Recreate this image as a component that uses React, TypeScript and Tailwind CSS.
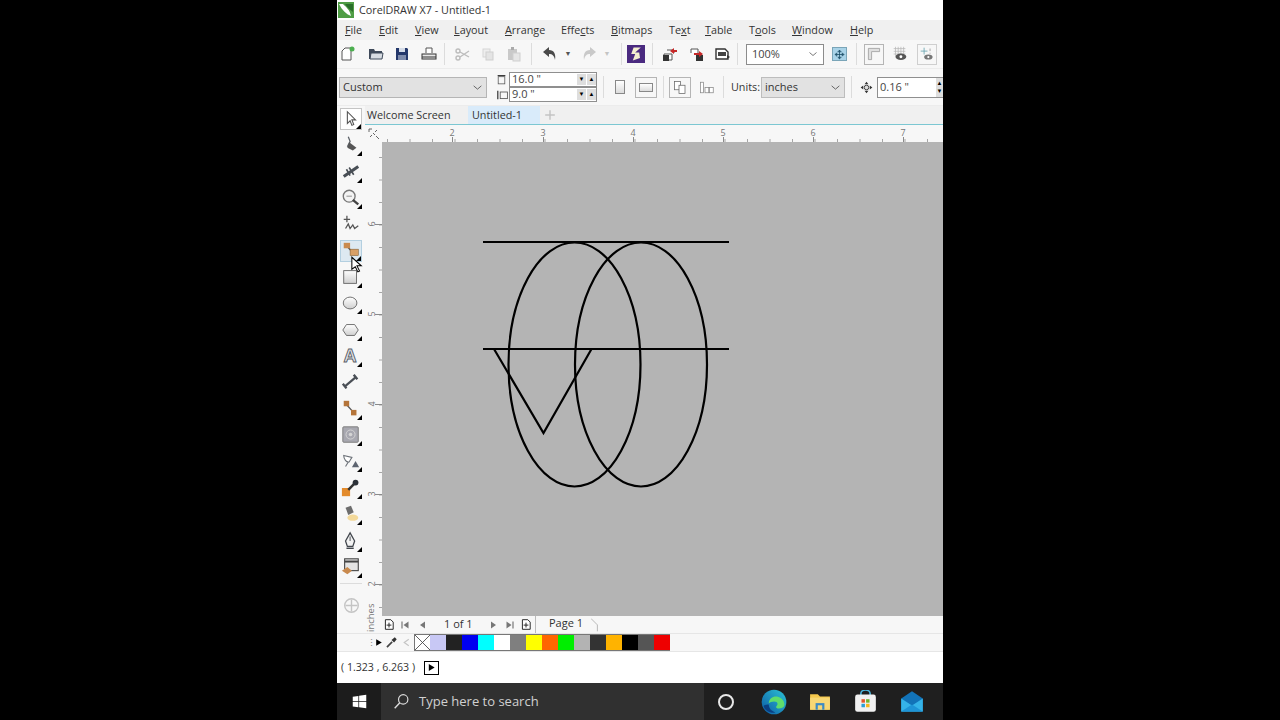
import type { ReactNode } from "react";

const menus = [
  { label: "File", u: 0, cls: "w-[34px]" },
  { label: "Edit", u: 0, cls: "w-[36px]" },
  { label: "View", u: 0, cls: "w-[39px]" },
  { label: "Layout", u: 0, cls: "w-[51px]" },
  { label: "Arrange", u: 0, cls: "w-[56px]" },
  { label: "Effects", u: 4, cls: "w-[50px]" },
  { label: "Bitmaps", u: 0, cls: "w-[58px]" },
  { label: "Text", u: 2, cls: "w-[36px]" },
  { label: "Table", u: 0, cls: "w-[44px]" },
  { label: "Tools", u: 1, cls: "w-[43px]" },
  { label: "Window", u: 0, cls: "w-[58px]" },
  { label: "Help", u: 0, cls: "w-[30px]" },
];

const swatches = ["#c8c8f5", "#222222", "#0000f0", "#00ffff", "#ffffff", "#7f7f7f", "#ffff00", "#ff6600", "#00ee00", "#b3b3b3", "#333333", "#ffb300", "#000000", "#555555", "#ee0000"];

function Ico({ children, className = "w-[20px] h-[20px]", vb = "0 0 20 20" }: { children: ReactNode; className?: string; vb?: string }) {
  return (
    <svg viewBox={vb} className={className} fill="none">
      {children}
    </svg>
  );
}

function Sep({ h = "h-[22px]" }: { h?: string }) {
  return <div className={`w-px bg-[#dcdcdc] ${h}`} />;
}

function TopToolbar() {
  return (
    <div className="h-[28px] flex items-center bg-[#f7f7f7]">
      <div className="w-[20px] flex justify-center">
        <Ico>
          <path d="M5 16V7l3-3h6v12z" fill="#fff" stroke="#555" strokeWidth="1" />
          <circle cx="15" cy="5" r="2.5" fill="#4caf50" />
        </Ico>
      </div>
      <div className="w-[27px] ml-[5px] flex justify-center">
        <Ico>
          <path d="M3 15V5h5l1 2h7v8z" fill="#3f4a5a" />
          <path d="M5 9h12l-1 6H4z" fill="#d8dde3" stroke="#3f4a5a" />
        </Ico>
      </div>
      <div className="w-[26px] flex justify-center">
        <Ico>
          <path d="M4 4h11l1 1v11H4z" fill="#24386b" />
          <rect x="7" y="4" width="6" height="4" fill="#d5dce8" />
          <rect x="6" y="11" width="8" height="5" fill="#7d8bab" />
        </Ico>
      </div>
      <div className="w-[27px] flex justify-center">
        <Ico>
          <path d="M7 9V4h6v5" fill="#fff" stroke="#555" />
          <rect x="3" y="10" width="14" height="5" fill="#e8e8e8" stroke="#333" />
          <path d="M3 13h14" stroke="#333" />
        </Ico>
      </div>
      <div className="ml-[2px] mr-[3px]">
        <Sep />
      </div>
      <div className="w-[27px] flex justify-center">
        <Ico>
          <circle cx="6" cy="7" r="2" stroke="#bdbdbd" strokeWidth="1.4" />
          <circle cx="6" cy="14" r="2" stroke="#bdbdbd" strokeWidth="1.4" />
          <path d="M8 8l9 5M8 13l9-6" stroke="#bdbdbd" strokeWidth="1.4" />
        </Ico>
      </div>
      <div className="w-[26px] flex justify-center">
        <Ico>
          <rect x="5" y="5" width="7" height="8" fill="#eee" stroke="#d5d5d5" />
          <rect x="8" y="8" width="7" height="8" fill="#e4e4e4" stroke="#cfcfcf" />
        </Ico>
      </div>
      <div className="w-[26px] flex justify-center">
        <Ico>
          <rect x="4" y="5" width="9" height="11" fill="#c9c9c9" />
          <rect x="7" y="3" width="3" height="3" fill="#aaa" />
          <rect x="9" y="9" width="7" height="8" fill="#e6e6e6" stroke="#cfcfcf" />
        </Ico>
      </div>
      <div className="ml-[4px] mr-[8px]">
        <Sep />
      </div>
      <div className="w-[20px] flex justify-center">
        <Ico>
          <path d="M9 3L3 8l6 5v-3c3 0 5 1 6 6 1-6-1-10-6-10z" fill="#4a4a4a" />
        </Ico>
      </div>
      <div className="w-[16px] text-[#555] text-[7px] text-center">▼</div>
      <div className="w-[20px] ml-[3px] flex justify-center">
        <Ico>
          <path d="M11 3l6 5-6 5v-3c-3 0-5 1-6 6-1-6 1-10 6-10z" fill="#c9c9c9" />
        </Ico>
      </div>
      <div className="w-[16px] text-[#c4c4c4] text-[7px] text-center">▼</div>
      <div className="ml-[6px] mr-[5px]">
        <Sep />
      </div>
      <div className="w-[18px] h-[18px] bg-[#4a2a80] flex items-center justify-center">
        <Ico className="w-[16px] h-[16px]">
          <path d="M16 2H7L4 10h5l-3 8 9-3-1-7H9z" fill="#f4efd0" />
        </Ico>
      </div>
      <div className="ml-[7px] mr-[4px]">
        <Sep />
      </div>
      <div className="w-[26px] flex justify-center">
        <Ico>
          <path d="M7 6h7v3M4 10h8v6H4z" stroke="#555" fill="#fff" />
          <rect x="3" y="11" width="6" height="6" fill="#333" />
          <path d="M10 7l4-3v2h3v2h-3v2z" fill="#c62828" />
        </Ico>
      </div>
      <div className="w-[26px] flex justify-center">
        <Ico>
          <path d="M5 9V5h7v4" stroke="#555" fill="#fff" />
          <rect x="10" y="11" width="7" height="6" fill="#333" />
          <path d="M8 9l5-0v-2l4 3-4 3v-2H8z" fill="#c62828" />
        </Ico>
      </div>
      <div className="w-[26px] flex justify-center">
        <Ico>
          <path d="M4 15V5h9l3 3v7z" fill="#fff" stroke="#333" strokeWidth="1.4" />
          <rect x="6" y="8" width="8" height="4" fill="#444" />
          <path d="M15 11l3 2-3 2z" fill="#333" />
        </Ico>
      </div>
      <div className="ml-[2px] mr-[8px]">
        <Sep />
      </div>
      <div className="w-[78px] h-[21px] border border-[#8c8c8c] bg-white flex items-center justify-between pl-[5px] pr-[5px]">
        <span className="text-[11px] text-[#444]">100%</span>
        <Ico className="w-[10px] h-[10px]">
          <path d="M3 7l7 6 7-6" stroke="#555" strokeWidth="1.6" />
        </Ico>
      </div>
      <div className="w-[30px] flex justify-center">
        <div className="w-[15px] h-[14px] bg-[#a9d3e8] border border-[#7aa5b8] flex items-center justify-center">
          <Ico className="w-[11px] h-[11px]">
            <path d="M10 2v16M2 10h16M10 2L7 5h6zM10 18l-3-3h6zM2 10l3-3v6zM18 10l-3-3v6z" stroke="#174a63" strokeWidth="1.4" />
          </Ico>
        </div>
      </div>
      <div className="ml-[2px] mr-[7px]">
        <Sep />
      </div>
      <div className="w-[20px] h-[21px] border border-[#b5b5b5] bg-[#f7f7f7] flex items-center justify-center">
        <Ico className="w-[16px] h-[16px]">
          <path d="M3 3h14v4H7v10H3z" fill="#dfdfdf" stroke="#9a9a9a" />
        </Ico>
      </div>
      <div className="w-[26px] ml-[3px] flex justify-center">
        <Ico className="w-[18px] h-[18px]">
          <path d="M3 4h13M3 7h13M3 10h13M5 2v10M8 2v10M11 2v10M14 2v10" stroke="#b5b5b5" strokeWidth=".8" />
          <ellipse cx="11" cy="13" rx="6" ry="3.6" fill="#555" />
          <circle cx="11" cy="13" r="1.6" fill="#fff" />
        </Ico>
      </div>
      <div className="w-[20px] h-[21px] ml-[4px] border border-[#cfcfcf] flex items-center justify-center">
        <Ico className="w-[17px] h-[17px]">
          <path d="M2 6h8M6 2v8" stroke="#6aa5b0" />
          <path d="M13 3v3M13 8v1" stroke="#999" />
          <ellipse cx="11" cy="13" rx="5" ry="3" fill="#777" />
          <circle cx="11" cy="13" r="1.3" fill="#fff" />
        </Ico>
      </div>
    </div>
  );
}

function Spin({ value, icon }: { value: string; icon: ReactNode }) {
  return (
    <div className="flex items-center h-[15px]">
      <div className="w-[15px] flex justify-center">{icon}</div>
      <div className="w-[88px] h-[15px] bg-white border border-[#8f8f8f] flex items-center pl-[2px] text-[11px] text-[#444]">
        <span className="flex-1">{value}</span>
        <span className="w-[9px] h-[11px] bg-[#dedede] flex items-center justify-center text-[6px] text-black">▼</span>
        <span className="w-[9px] h-[11px] ml-px bg-[#dedede] flex items-center justify-center text-[6px] text-black">▲</span>
      </div>
    </div>
  );
}

function PropertyBar() {
  return (
    <div className="h-[38px] flex items-center bg-[#f7f7f7] border-t border-[#ececec] border-b pl-[2px]">
      <div className="w-[148px] h-[21px] bg-[#e2e2e2] border border-[#b5b5b5] flex items-center justify-between px-[3px]">
        <span className="text-[11px] text-[#333]">Custom</span>
        <Ico className="w-[11px] h-[11px]">
          <path d="M3 7l7 6 7-6" stroke="#555" strokeWidth="1.6" />
        </Ico>
      </div>
      <div className="ml-[7px] flex flex-col">
        <Spin
          value='16.0 "'
          icon={
            <Ico className="w-[11px] h-[12px]">
              <rect x="4" y="4" width="12" height="13" stroke="#555" strokeWidth="1.4" />
              <path d="M3 2h14" stroke="#333" strokeWidth="2" />
            </Ico>
          }
        />
        <Spin
          value='9.0 "'
          icon={
            <Ico className="w-[12px] h-[12px]">
              <rect x="7" y="5" width="12" height="11" stroke="#555" strokeWidth="1.4" />
              <path d="M3 3v14" stroke="#333" strokeWidth="2" />
            </Ico>
          }
        />
      </div>
      <div className="ml-[6px] mr-[11px]">
        <Sep />
      </div>
      <div className="w-[10px] h-[14px] border border-[#888] bg-gradient-to-b from-white to-[#dcdcdc]" />
      <div className="ml-[10px] w-[22px] h-[21px] flex items-center justify-center border border-[#b5b5b5]">
        <div className="w-[14px] h-[9px] shrink-0 border border-[#888] bg-gradient-to-b from-white to-[#dcdcdc]" />
      </div>
      <div className="ml-[6px] mr-[5px]">
        <Sep />
      </div>
      <div className="w-[22px] h-[21px] border border-[#b5b5b5] flex items-center justify-center">
        <Ico className="w-[15px] h-[15px]">
          <rect x="2" y="2" width="8" height="11" fill="#fff" stroke="#666" />
          <rect x="8" y="7" width="8" height="11" fill="#fff" stroke="#666" />
        </Ico>
      </div>
      <div className="w-[26px] ml-[2px] flex justify-center">
        <Ico className="w-[15px] h-[15px]">
          <rect x="2" y="3" width="4" height="14" fill="#fff" stroke="#888" />
          <rect x="8" y="10" width="5" height="7" fill="#fff" stroke="#888" />
          <rect x="14" y="10" width="5" height="7" fill="#fff" stroke="#888" />
        </Ico>
      </div>
      <div className="ml-[4px] mr-[7px]">
        <Sep />
      </div>
      <span className="text-[10.8px] text-[#333] w-[30px]">Units:</span>
      <div className="w-[84px] h-[21px] bg-[#e2e2e2] border border-[#bdbdbd] flex items-center justify-between pl-[3px] pr-[3px]">
        <span className="text-[11px] text-[#333]">inches</span>
        <Ico className="w-[11px] h-[11px]">
          <path d="M3 7l7 6 7-6" stroke="#555" strokeWidth="1.6" />
        </Ico>
      </div>
      <div className="ml-[6px] mr-[8px]">
        <Sep />
      </div>
      <Ico className="w-[13px] h-[13px]">
        <path d="M10 1l-3 4h6zM10 19l-3-4h6zM1 10l4-3v6zM19 10l-4-3v6z" fill="#333" />
        <circle cx="10" cy="10" r="3.5" stroke="#333" strokeWidth="1.4" fill="#ddd" />
      </Ico>
      <div className="ml-[4px] flex-1 h-[21px] bg-white border border-[#8f8f8f] border-r-0 flex items-center justify-between pl-[2px] overflow-hidden">
        <span className="text-[11px] text-[#444]">0.16 "</span>
        <span className="w-[7px] h-full bg-[#dedede] flex flex-col items-center justify-center text-[6px] leading-[8px] text-black">
          <span>▲</span>
          <span>▼</span>
        </span>
      </div>
    </div>
  );
}

function Toolbox() {
  const c = "#5a5f66";
  const tools: ReactNode[] = [
    <path key="p" d="M7 3v13l3-3 2 5 2-1-2-5h4z" fill="#fff" stroke="#555" strokeWidth="1.2" />,
    <g key="s">
      <path d="M8 2l2 5-3 6" stroke={c} strokeWidth="1.4" />
      <path d="M9 8l8 6-4 3-6-3z" fill="#555" />
    </g>,
    <g key="c" stroke="#484e55">
      <path d="M3 16L19 5" strokeWidth="3.4" />
      <path d="M9 6l5 8M6 8l4 7" strokeWidth="1.8" />
    </g>,
    <g key="z">
      <circle cx="9" cy="9" r="6.500" fill="#f3f3f3" stroke="#777" strokeWidth="1.5" />
      <path d="M6 9h6" stroke="#888" />
      <path d="M13 13l6 5" stroke="#444" strokeWidth="2.6" />
    </g>,
    <g key="f" stroke="#555" strokeWidth="1.4">
      <path d="M3 6h7M6.500 2v7" />
      <path d="M5 16l3-5 2 5 3-4 2 4 4-3" />
    </g>,
    <g key="sm">
      <path d="M6 5l8 9" stroke="#555" strokeWidth="1.6" />
      <rect x="3" y="2" width="7" height="6" fill="#c98a4e" />
      <rect x="10" y="9" width="9" height="7" fill="#d9a066" stroke="#7d5a30" strokeWidth=".6" />
    </g>,
    <rect key="r" x="3" y="4" width="14" height="14" fill="url(#rg)" stroke="#666" />,
    <ellipse key="e" cx="10" cy="11" rx="7.500" ry="6.500" fill="url(#rg)" stroke="#666" />,
    <path key="h" d="M6 5h9l4 6-4 6H6l-4-6z" fill="url(#rg)" stroke="#666" />,
  ];
  const tools2: ReactNode[] = [
    <text key="t" x="10" y="18" textAnchor="middle" fontSize="20" fontWeight="700" fill="#e4e6ea" stroke="#5a6069" strokeWidth="1" fontFamily="Liberation Sans, sans-serif">A</text>,
    <g key="d" stroke="#4a4f56">
      <path d="M4 16L16 6" strokeWidth="2.4" />
      <path d="M2 13l4 5M14 3l4 5" strokeWidth="2.6" />
    </g>,
    <g key="cn">
      <path d="M6 6l8 9" stroke="#555" strokeWidth="1.4" />
      <rect x="3" y="2" width="6" height="6" fill="#b5753a" />
      <rect x="11" y="12" width="6" height="6" fill="#b5753a" />
    </g>,
    <g key="sh">
      <rect x="2" y="2" width="17" height="17" rx="1" fill="#a8a8b0" stroke="#777" />
      <circle cx="10.500" cy="10.500" r="5" stroke="#d5d5d5" fill="none" />
      <circle cx="10.500" cy="10.500" r="2" fill="#d5d5d5" />
    </g>,
    <g key="tr">
      <path d="M3 5l9 2-3 5c-3 1-6-3-6-7z" fill="#fff" stroke="#6a6f76" strokeWidth="1.2" />
      <path d="M8 12l-3 5" stroke="#6a6f76" strokeWidth="1.2" />
      <path d="M12 18l4-7 4 7z" fill="#5d6470" />
    </g>,
    <g key="ey">
      <rect x="1" y="11" width="9" height="9" fill="#e38b2c" />
      <path d="M8 13l7-7" stroke="#333" strokeWidth="2.8" />
      <circle cx="16" cy="5" r="3.200" fill="#2c3138" />
    </g>,
    <g key="fl">
      <path d="M5 4l6-2 3 7-6 3z" fill="#6d6d6d" />
      <ellipse cx="13" cy="15" rx="6" ry="3.500" fill="#f3d99a" />
    </g>,
    <g key="pen">
      <path d="M10 2l5 9-2 6H7l-2-6z" fill="#f2f2f2" stroke="#40454c" strokeWidth="1.4" />
      <path d="M10 6v5" stroke="#40454c" />
      <path d="M6 19h8" stroke="#40454c" strokeWidth="1.6" />
    </g>,
    <g key="cf">
      <rect x="4" y="2" width="15" height="13" fill="#e4e4e4" stroke="#444" strokeWidth="1.2" />
      <path d="M4 5h15" stroke="#444" strokeWidth="2.2" />
      <path d="M1 15l6-4 5 4-5 4z" fill="#c98a4e" />
    </g>,
  ];
  const corner = (i: number) => ![4, 10].includes(i);
  return (
    <div className="w-[28px] shrink-0 flex flex-col items-center pt-[2px] bg-[#f7f7f7] h-full">
      <svg width="0" height="0" className="absolute">
        <defs>
          <linearGradient id="rg" x1="0" y1="0" x2="0" y2="1">
            <stop offset="0" stopColor="#ffffff" />
            <stop offset="1" stopColor="#cfcfcf" />
          </linearGradient>
        </defs>
      </svg>
      <div className="flex flex-col items-center">
        {[...tools, ...tools2].map((t, i) => (
          <div
            key={i}
            className={`relative w-[22px] h-[22px] mb-[4.35px] flex items-center justify-center ${i === 0 ? "bg-white border border-[#c4c4c4]" : ""} ${i === 5 ? "bg-[#dde9f1] border border-[#b3cfe0]" : ""}`}
          >
            <Ico vb="0 0 22 22" className="w-[20px] h-[20px]">
              {t}
            </Ico>
            {corner(i) && <span className="absolute right-[0px] bottom-[0px] border-l-[5px] border-l-transparent border-b-[5px] border-b-black" />}
            {i === 5 && (
              <svg viewBox="0 0 14 20" className="absolute left-[10px] top-[15px] w-[12px] h-[18px] z-10">
                <path d="M1 1v14l4-3 3 6 2-1-3-6h5z" fill="#fff" stroke="#000" strokeWidth="1.2" />
              </svg>
            )}
          </div>
        ))}
      </div>
      <div className="w-[22px] h-px bg-[#dcdcdc] mt-[1px] mb-[13px]" />
      <Ico className="w-[17px] h-[17px]">
        <circle cx="10" cy="10" r="8" stroke="#c4c4c4" strokeWidth="1.6" />
        <path d="M10 3v14M3 10h14" stroke="#c4c4c4" strokeWidth="1.6" />
      </Ico>
    </div>
  );
}

function HRuler() {
  const nums = [
    { n: "2", x: 452 },
    { n: "3", x: 543 },
    { n: "4", x: 633 },
    { n: "5", x: 723 },
    { n: "6", x: 813 },
    { n: "7", x: 903 },
  ];
  const off = 365;
  const ticks: number[] = [];
  for (let x = 385; x < 943; x += 22.5) ticks.push(x - off);
  return (
    <svg viewBox="0 0 578 17" className="w-[578px] h-[17px] block">
      <g transform="translate(3,3)" stroke="#555" strokeWidth=".9">
        <path d="M1 1h3M1 1v3M8 8l3 3M5 5l2 2M9 2l-2 2M2 9l2-2" />
      </g>
      {ticks.map((t, i) => (
        <rect key={i} x={t + 2} y={14} width="1" height="3" fill="#a6a6a6" />
      ))}
      {nums.map((v) => (
        <g key={v.n}>
          <text x={v.x - off} y={11} fontSize="9" fill="#777" textAnchor="middle" fontFamily="Open Sans, sans-serif">
            {v.n}
          </text>
          <rect x={v.x - off} y={12} width="1" height="5" fill="#8a8a8a" />
        </g>
      ))}
    </svg>
  );
}

function VRuler() {
  const nums = [
    { n: "6", y: 224 },
    { n: "5", y: 314 },
    { n: "4", y: 404 },
    { n: "3", y: 494 },
    { n: "2", y: 584 },
  ];
  const off = 142;
  const ticks: number[] = [];
  for (let y = 157; y < 616; y += 22.5) ticks.push(y - off);
  return (
    <svg viewBox="0 0 17 491" className="w-[17px] h-[491px] shrink-0 block bg-[#f7f7f7]">
      {ticks.map((t, i) => (
        <rect key={i} x={14} y={t} width="3" height="1" fill="#a6a6a6" />
      ))}
      {nums.map((v) => (
        <g key={v.n}>
          <text x={7} y={v.y - off + 3} fontSize="9" fill="#777" textAnchor="middle" fontFamily="Open Sans, sans-serif" transform={`rotate(-90 7 ${v.y - off})`}>
            {v.n}
          </text>
          <rect x={10} y={v.y - off} width="7" height="1" fill="#8a8a8a" />
        </g>
      ))}
      <text x={-490} y={9} fontSize="9.500" fill="#777" fontFamily="Open Sans, sans-serif" transform="rotate(-90)">
        inches
      </text>
    </svg>
  );
}

function Drawing() {
  return (
    <svg viewBox="0 0 561 474" className="w-[561px] h-[474px] block" fill="none" stroke="#000">
      <path d="M101 100H347M101 207H347" strokeWidth="2.200" />
      <ellipse cx="192.500" cy="222.500" rx="66" ry="122" strokeWidth="2.200" />
      <ellipse cx="259" cy="222.500" rx="66" ry="122" strokeWidth="2.200" />
      <path d="M112 207L161.500 291L209.500 207" strokeWidth="2.200" />
    </svg>
  );
}

function PageNav() {
  return (
    <div className="h-[17px] flex items-center bg-[#f7f7f7] text-[#333]">
      <div className="w-[14px] h-[14px] flex justify-center">
        <Ico className="w-[12px] h-[13px]">
          <path d="M4 2h9l4 4v12H4z" fill="#fff" stroke="#222" strokeWidth="1.6" />
          <path d="M10 7v8M6 11h8" stroke="#222" strokeWidth="1.6" />
        </Ico>
      </div>
      <div className="w-[18px] flex justify-center">
        <Ico className="w-[10px] h-[10px]">
          <path d="M4 3v14" stroke="#777" strokeWidth="2.4" />
          <path d="M17 3L7 10l10 7z" fill="#777" />
        </Ico>
      </div>
      <div className="w-[16px] flex justify-center">
        <Ico className="w-[10px] h-[10px]">
          <path d="M16 3L6 10l10 7z" fill="#777" />
        </Ico>
      </div>
      <div className="w-[56px] pl-[14px] text-[11px] whitespace-nowrap">1 of 1</div>
      <div className="w-[16px] flex justify-center">
        <Ico className="w-[10px] h-[10px]">
          <path d="M4 3l10 7-10 7z" fill="#777" />
        </Ico>
      </div>
      <div className="w-[16px] flex justify-center">
        <Ico className="w-[10px] h-[10px]">
          <path d="M3 3l10 7-10 7z" fill="#777" />
          <path d="M16 3v14" stroke="#777" strokeWidth="2.4" />
        </Ico>
      </div>
      <div className="w-[14px] ml-[1px] flex justify-center">
        <Ico className="w-[12px] h-[13px]">
          <path d="M4 2h9l4 4v12H4z" fill="#fff" stroke="#222" strokeWidth="1.6" />
          <path d="M10 7v8M6 11h8" stroke="#222" strokeWidth="1.6" />
        </Ico>
      </div>
      <div className="ml-[2px] h-[17px] border-l border-[#bbb] flex">
        <span className="pl-[13px] text-[11px] leading-[14px] whitespace-nowrap">Page 1</span>
        <svg viewBox="0 0 10 17" className="w-[8px] h-[17px] ml-[8px]">
          <path d="M0 1l8 8v8" stroke="#aaa" fill="none" />
        </svg>
      </div>
    </div>
  );
}

function Palette() {
  return (
    <div className="h-[19px] flex items-center bg-[#f7f7f7] border-t border-b border-[#e6e6e6] pl-[30px]">
      <span className="text-[#888] text-[9px] w-[8px]">⋮</span>
      <Ico className="w-[8px] h-[9px]">
        <path d="M3 2l14 8-14 8z" fill="#000" />
      </Ico>
      <div className="w-[16px] flex justify-center ml-[0px]">
        <Ico className="w-[13px] h-[13px]">
          <path d="M3 17l8-8" stroke="#444" strokeWidth="2.6" />
          <path d="M10 6l5-4 3 3-4 5z" fill="#333" />
        </Ico>
      </div>
      <div className="w-[8px] ml-[3px]">
        <Ico className="w-[9px] h-[11px]">
          <path d="M15 3L5 10l10 7" stroke="#c4c4c4" strokeWidth="2.6" />
        </Ico>
      </div>
      <div className="ml-[4px] flex border-t border-b border-[#777] h-[17px] items-stretch">
        <div className="w-[16px] bg-white border-l border-[#777]">
          <svg viewBox="0 0 16 16" className="w-full h-full block">
            <path d="M0 0l16 16M16 0L0 16" stroke="#444" strokeWidth=".9" />
          </svg>
        </div>
        {swatches.map((c) => (
          <div key={c} className="w-[16px]" style={{ backgroundColor: c }} />
        ))}
      </div>
    </div>
  );
}

function Taskbar() {
  return (
    <div className="h-[37px] flex bg-[#1f1f1f]">
      <div className="w-[44px] flex items-center justify-center bg-[#1c1c1c]">
        <Ico className="w-[15px] h-[15px]">
          <path d="M1 3.500l7.500-1v7H1zM9.500 2.300L19 1v8.500H9.500zM1 10.500h7.500v7l-7.500-1zM9.500 10.500H19V19l-9.500-1.300z" fill="#fff" />
        </Ico>
      </div>
      <div className="w-[323px] bg-[#303030] flex items-center pl-[12px]">
        <Ico className="w-[17px] h-[17px]">
          <circle cx="12" cy="7.500" r="5.500" stroke="#ddd" strokeWidth="1.4" />
          <path d="M8 11.500L2 18" stroke="#ddd" strokeWidth="1.6" />
        </Ico>
        <span className="ml-[9px] text-[13px] text-[#d0d0d0]">Type here to search</span>
      </div>
      <div className="flex-1 flex items-center pl-[14px]">
        <div className="w-[16px] h-[16px] rounded-full border-[2.5px] border-[#e8e8e8]" />
        <div className="ml-[27px]">
          <Ico className="w-[26px] h-[26px]">
            <defs>
              <linearGradient id="edge" x1="0" y1="1" x2="1" y2="0">
                <stop offset="0" stopColor="#0c59a4" />
                <stop offset="1" stopColor="#2cc3d5" />
              </linearGradient>
            </defs>
            <circle cx="10" cy="10" r="9.500" fill="url(#edge)" />
            <path d="M6 11c0-4 4-6 7-5 3 1 5 3 5 6 0 2-2 3-4 3-2 0-3-1-2-2 1-1 1-2 0-3-2-1-5 0-6 1z" fill="#5fdd6c" />
            <path d="M6 12c0 3 2 5 5 6-3 1-8-1-9-5 1-1 3-1 4-1z" fill="#0a3f82" />
          </Ico>
        </div>
        <div className="ml-[22px]">
          <Ico className="w-[22px] h-[22px]">
            <path d="M1 3h7l2 2h9v12H1z" fill="#f5c84c" />
            <rect x="1" y="6" width="18" height="11" fill="#f7d774" />
            <rect x="6" y="11" width="8" height="6" fill="#3c8bc4" />
            <rect x="8" y="13" width="4" height="4" fill="#f7d774" />
          </Ico>
        </div>
        <div className="ml-[23px]">
          <Ico className="w-[23px] h-[23px]">
            <path d="M6 5V3a4 3 0 0 1 8 0v2" stroke="#4bb4dd" strokeWidth="1.4" />
            <rect x="1" y="4" width="18" height="15" rx="2" fill="#f1f1f1" />
            <rect x="6.500" y="8" width="3" height="3" fill="#e2562d" />
            <rect x="10.500" y="8" width="3" height="3" fill="#6eb52f" />
            <rect x="6.500" y="12" width="3" height="3" fill="#2a9fd8" />
            <rect x="10.500" y="12" width="3" height="3" fill="#f5b71c" />
          </Ico>
        </div>
        <div className="ml-[23px]">
          <Ico className="w-[24px] h-[24px]">
            <path d="M10 1L1 7v11h18V7z" fill="#1273b8" />
            <path d="M1 7l9 6 9-6v11H1z" fill="#35b3e8" />
            <path d="M1 18l9-6 9 6z" fill="#1e94d6" />
          </Ico>
        </div>
      </div>
    </div>
  );
}

export default function App() {
  return (
    <div className="h-screen bg-black flex justify-center font-['Open_Sans',sans-serif]">
      <div className="w-[606px] h-[720px] flex flex-col bg-[#f8f8f8] overflow-hidden">
        <div className="h-[20px] bg-white flex items-center pl-[1px]">
          <svg viewBox="0 0 16 16" className="w-[16px] h-[16px]">
            <rect width="16" height="16" fill="#4f9d45" />
            <path d="M1 2l4 0c3 3 7 6 8 12C8 12 4 8 1 2z" fill="#fff" />
            <path d="M7 2h8v8C12 8 9 5 7 2z" fill="#2a6e2a" />
          </svg>
          <span className="ml-[5px] text-[10.8px] text-[#333]">CorelDRAW X7 - Untitled-1</span>
        </div>
        <div className="h-[20px] bg-[#f0f0f0] flex items-center pl-[8px] text-[10.8px] text-[#333]">
          {menus.map((m) => (
            <div key={m.label} className={m.cls}>
              {m.label.slice(0, m.u)}
              <span className="underline">{m.label[m.u]}</span>
              {m.label.slice(m.u + 1)}
            </div>
          ))}
        </div>
        <TopToolbar />
        <PropertyBar />
        <div className="flex flex-1 min-h-0">
          <Toolbox />
          <div className="flex-1 flex flex-col min-w-0">
            <div className="h-[19px] bg-[#f0f0f0] flex items-center border-b border-[#7cc7d2]">
              <div className="w-[103px] pl-[2px] text-[10.8px] text-[#333]">Welcome Screen</div>
              <div className="w-[72px] h-full bg-[#d9ebfa] pl-[4px] text-[10.8px] leading-[18px] text-[#333]">Untitled-1</div>
              <div className="w-[19px] flex justify-center">
                <Ico className="w-[12px] h-[12px]">
                  <path d="M10 2v16M2 10h16" stroke="#c4c4c4" strokeWidth="2.400" />
                </Ico>
              </div>
            </div>
            <div className="h-[17px] bg-[#f7f7f7] overflow-hidden">
              <HRuler />
            </div>
            <div className="flex">
              <VRuler />
              <div className="w-[561px]">
                <div className="h-[474px] bg-[#b4b4b4]">
                  <Drawing />
                </div>
                <PageNav />
              </div>
            </div>
          </div>
        </div>
        <Palette />
        <div className="h-[31px] bg-white flex items-center pl-[4px] text-[10.6px] text-[#333]">
          <span>( 1.323 , 6.263 )</span>
          <div className="ml-[9px] w-[15px] h-[14px] border border-black flex items-center justify-center">
            <Ico className="w-[9px] h-[9px]">
              <path d="M4 2l13 8-13 8z" fill="#000" />
            </Ico>
          </div>
        </div>
        <Taskbar />
      </div>
    </div>
  );
}
